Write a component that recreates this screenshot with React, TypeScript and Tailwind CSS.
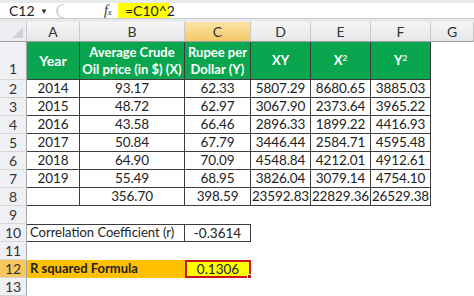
const rows = [
  ["2014", "93.17", "62.33", "5807.29", "8680.65", "3885.03"],
  ["2015", "48.72", "62.97", "3067.90", "2373.64", "3965.22"],
  ["2016", "43.58", "66.46", "2896.33", "1899.22", "4416.93"],
  ["2017", "50.84", "67.79", "3446.44", "2584.71", "4595.48"],
  ["2018", "64.90", "70.09", "4548.84", "4212.01", "4912.61"],
  ["2019", "55.49", "68.95", "3826.04", "3079.14", "4754.10"],
  ["", "356.70", "398.59", "23592.83", "22829.36", "26529.38"],
];

const RowHead = ({ n, active, tall }: { n: number; active?: boolean; tall?: boolean }) => (
  <div
    className={
      "flex justify-center border-r border-b border-r-[#a5a5a5] border-b-[#d6d6d6] text-[14px] text-[#333] " +
      (tall ? "items-end " : "items-center ") +
      (active ? "bg-[#f8c65f]" : "bg-[#eef0f3]")
    }
  >
    {n}
  </div>
);

const ColHead = ({ label, active }: { label: string; active?: boolean }) => (
  <div
    className={
      "flex items-center justify-center border-r border-b border-r-[#c9c9c9] border-b-[#9e9e9e] text-[14px] text-[#333] " +
      (active ? "bg-gradient-to-b from-[#fbe3a3] to-[#f5c865]" : "bg-gradient-to-b from-[#f6f6f6] to-[#e6e7e9]")
    }
  >
    {label}
  </div>
);

const cell = "flex items-center justify-center border-r border-b border-[#3c3c3c] text-[13.5px] tracking-[-0.1px]";
const head = "flex flex-col items-center justify-center border-r border-b border-[#3c3c3c] bg-[#0aa64f] text-white font-bold leading-[17px] text-center";

export default function App() {
  return (
    <div className="w-[474px] h-[296px] overflow-hidden bg-white text-[13px] text-[#222]" style={{ fontFamily: "Lato, 'Liberation Sans', sans-serif" }}>
      {/* formula bar */}
      <div className="h-[22px] bg-[#e8eaed] pt-[3px] pb-[3px]">
        <div className="h-full bg-white flex items-center border-b border-[#c8c8c8]">
          <div className="w-[40px] pl-[9px] text-[14px] text-[#222]">C12</div>
          <span className="text-[8px] text-[#333]">▼</span>
          <div className="ml-[8px] w-[8px] h-[14px] rounded-l-full border-l-2 border-t border-b border-[#cfd3d8]" />
          <div className="ml-[40px] w-[14px] italic text-[14px] text-[#333]" style={{ fontFamily: "'Liberation Serif', serif" }}>
            f<span className="text-[9px]">x</span>
          </div>
          <div className="h-[15px] w-[51px] bg-[#ffff00] flex items-center pl-[7px] text-[14px]">=C10^2</div>
        </div>
      </div>

      {/* sheet */}
      <div className="grid grid-cols-[27px_53px_105px_66px_60px_60px_60px_1fr] grid-rows-[20px_38px_repeat(12,18px)]">
        <div className="relative border-r border-b border-r-[#c9c9c9] border-b-[#9e9e9e] bg-[#eceef1]">
          <div className="absolute right-[3px] bottom-[3px] w-0 h-0" style={{ borderBottom: "11px solid #cfd2d6", borderLeft: "11px solid transparent" }} />
        </div>
        <ColHead label="A" />
        <ColHead label="B" />
        <ColHead label="C" active />
        <ColHead label="D" />
        <ColHead label="E" />
        <ColHead label="F" />
        <ColHead label="G" />

        {/* row 1 */}
        <RowHead n={1} tall />
        <div className={head + " text-[14px]"}>Year</div>
        <div className={head}>
          <span>Average Crude</span>
          <span>Oil price (in $) (X)</span>
        </div>
        <div className={head}>
          <span>Rupee per</span>
          <span>Dollar (Y)</span>
        </div>
        <div className={head}>XY</div>
        <div className={head}>
          <span>
            X<sup className="text-[8px]">2</sup>
          </span>
        </div>
        <div className={head}>
          <span>
            Y<sup className="text-[8px]">2</sup>
          </span>
        </div>
        <div />

        {rows.map((r, i) => (
          <div key={i} className="contents">
            <RowHead n={i + 2} />
            {r.map((v, j) => (
              <div key={j} className={cell}>
                {v}
              </div>
            ))}
            <div />
          </div>
        ))}

        {/* row 9 */}
        <RowHead n={9} />
        <div className="col-span-7" />

        {/* row 10 */}
        <RowHead n={10} />
        <div className="col-span-2 flex items-center pl-[3px] border-t border-r border-b border-[#3c3c3c]">Correlation Coefficient (r)</div>
        <div className="flex items-center justify-center border-t border-r border-b border-[#3c3c3c] text-[13.5px]">-0.3614</div>
        <div className="col-span-4" />

        {/* row 11 */}
        <RowHead n={11} />
        <div className="col-span-7" />

        {/* row 12 */}
        <RowHead n={12} active />
        <div className="col-span-2 flex items-center pl-[3px] bg-[#ffc000] font-bold">R squared Formula</div>
        <div className="relative flex items-center justify-center bg-[#ffff00] border-2 border-[#c8141c] text-[13.5px]">
          0.1306
          <div className="absolute -right-[3px] -bottom-[3px] w-[5px] h-[5px] bg-[#b01218] border border-white" />
        </div>
        <div className="col-span-4" />

        {/* row 13 */}
        <RowHead n={13} />
        <div className="col-span-7" />
      </div>
    </div>
  );
}
